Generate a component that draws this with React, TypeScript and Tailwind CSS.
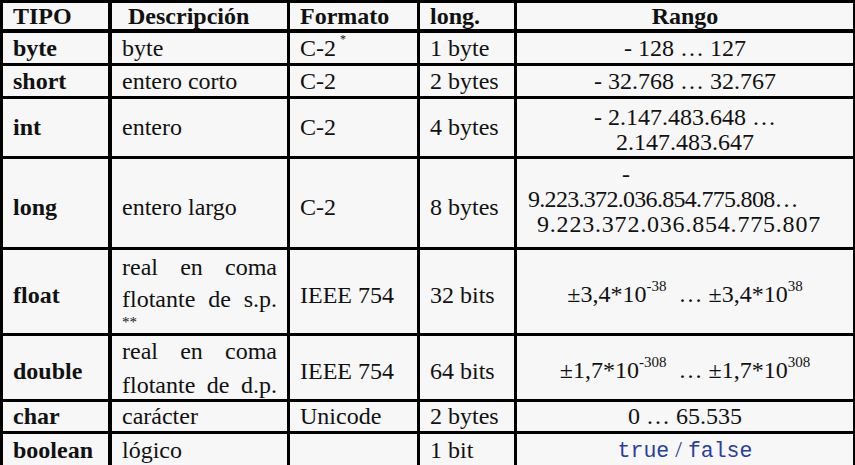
import React from "react";

const C1 = "w-[109px] shrink-0 border-r-4 border-black flex items-center pl-[10px] font-bold";
const C2 = "w-[178px] shrink-0 border-r-[3px] border-black flex items-center pl-[10px] pr-[10px]";
const C3 = "w-[130px] shrink-0 border-r-[3px] border-black flex items-center pl-[10px]";
const C4 = "w-[97px] shrink-0 border-r-[3px] border-black flex items-center pl-[10px]";
const C5 = "w-[338px] shrink-0 border-r-2 border-black flex flex-col items-center justify-center text-center";

function Justified({ words }: { words: string[] }) {
  return (
    <div className="flex justify-between w-full">
      {words.map((w, i) => (
        <span key={i}>{w}</span>
      ))}
    </div>
  );
}

function Sup({ children }: { children: React.ReactNode }) {
  return <sup className="text-[15px] top-[-11px]">{children}</sup>;
}

export default function App() {
  return (
    <div className="w-[855px] h-[465px] overflow-hidden bg-[#f7f7f7]">
      <div className="w-[855px] border-l-[3px] border-t-[3px] border-black bg-[#f7f7f7] text-[#111] text-[24px] leading-[27px] [font-family:'Liberation_Serif','Times_New_Roman',serif]">
        {/* header */}
        <div className="flex h-[30px] border-b-4 border-black font-bold">
          <div className={C1}>TIPO</div>
          <div className="w-[178px] shrink-0 border-r-[3px] border-black flex items-center pl-[16px]">Descripción</div>
          <div className={C3}>Formato</div>
          <div className={C4}>long.</div>
          <div className={C5}>Rango</div>
        </div>

        {/* byte */}
        <div className="flex h-[33px] border-b-[3px] border-black">
          <div className={C1}>byte</div>
          <div className={C2}>byte</div>
          <div className={C3}>
            <span>
              C-2<sup className="text-[12px] top-[-13px] ml-[4px]">*</sup>
            </span>
          </div>
          <div className={C4}>1 byte</div>
          <div className={C5}>- 128 … 127</div>
        </div>

        {/* short */}
        <div className="flex h-[33px] border-b-[3px] border-black">
          <div className={C1}>short</div>
          <div className={C2}>entero corto</div>
          <div className={C3}>C-2</div>
          <div className={C4}>2 bytes</div>
          <div className={C5}>- 32.768 … 32.767</div>
        </div>

        {/* int */}
        <div className="flex h-[60px] border-b-[3px] border-black">
          <div className={C1}>int</div>
          <div className={C2}>entero</div>
          <div className={C3}>C-2</div>
          <div className={C4}>4 bytes</div>
          <div className={`${C5} leading-[25px] pt-[5px]`}>
            <div>- 2.147.483.648 …</div>
            <div>2.147.483.647</div>
          </div>
        </div>

        {/* long */}
        <div className="flex h-[91px] border-b-[3px] border-black">
          <div className={`${C1} pt-[9px]`}>long</div>
          <div className={`${C2} pt-[9px]`}>entero largo</div>
          <div className={`${C3} pt-[9px]`}>C-2</div>
          <div className={`${C4} pt-[9px]`}>8 bytes</div>
          <div className="w-[338px] shrink-0 border-r-2 border-black flex flex-col justify-center text-left leading-[25px] pb-[7px]">
            <div className="pl-[105px]">-</div>
            <div className="pl-[11px] tracking-[-0.7px] whitespace-nowrap">9.223.372.036.854.775.808…</div>
            <div className="pl-[20px] tracking-[0.8px] whitespace-nowrap">9.223.372.036.854.775.807</div>
          </div>
        </div>

        {/* float */}
        <div className="flex h-[86px] border-b-[3px] border-black">
          <div className={`${C1} pt-[8px]`}>float</div>
          <div className="w-[178px] shrink-0 border-r-[3px] border-black flex flex-col justify-center pl-[10px] pr-[10px] leading-[32px] pb-[4px]">
            <Justified words={["real", "en", "coma"]} />
            <Justified words={["flotante", "de", "s.p."]} />
            <div className="text-[15px] leading-[14px]">**</div>
          </div>
          <div className={`${C3} pt-[8px]`}>IEEE 754</div>
          <div className={`${C4} pt-[8px]`}>32 bits</div>
          <div className={`${C5} pt-[6px]`}>
            <div>
              ±3,4*10<Sup>-38</Sup>
              {"\u00a0 … ±3,4*10"}
              <Sup>38</Sup>
            </div>
          </div>
        </div>

        {/* double */}
        <div className="flex h-[66px] border-b-[3px] border-black">
          <div className={`${C1} pt-[7px]`}>double</div>
          <div className="w-[178px] shrink-0 border-r-[3px] border-black flex flex-col justify-center pl-[10px] pr-[10px] leading-[34px]">
            <Justified words={["real", "en", "coma"]} />
            <Justified words={["flotante", "de", "d.p."]} />
          </div>
          <div className={`${C3} pt-[7px]`}>IEEE 754</div>
          <div className={`${C4} pt-[7px]`}>64 bits</div>
          <div className={`${C5} pt-[5px]`}>
            <div>
              ±1,7*10<Sup>-308</Sup>
              {"\u00a0 … ±1,7*10"}
              <Sup>308</Sup>
            </div>
          </div>
        </div>

        {/* char */}
        <div className="flex h-[32px] border-b-[3px] border-black">
          <div className={C1}>char</div>
          <div className={C2}>carácter</div>
          <div className={C3}>Unicode</div>
          <div className={C4}>2 bytes</div>
          <div className={C5}>0 … 65.535</div>
        </div>

        {/* boolean */}
        <div className="flex h-[35px] border-b-[3px] border-black">
          <div className={C1}>boolean</div>
          <div className={C2}>lógico</div>
          <div className={C3}></div>
          <div className={C4}>1 bit</div>
          <div className={C5}>
            <div className="text-[#2a3d9c]">
              <span className="[font-family:'Liberation_Mono','Courier_New',monospace] text-[21.5px]">true</span>
              <span> / </span>
              <span className="[font-family:'Liberation_Mono','Courier_New',monospace] text-[21.5px]">false</span>
            </div>
          </div>
        </div>
      </div>
    </div>
  );
}
